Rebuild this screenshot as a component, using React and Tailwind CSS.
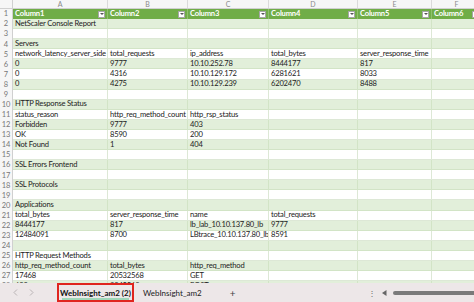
import React from "react";

const cols = [
  { key: "A", w: "w-[95px]" },
  { key: "B", w: "w-[80px]" },
  { key: "C", w: "w-[81px]" },
  { key: "D", w: "w-[89px]" },
  { key: "E", w: "w-[74px]" },
  { key: "F", w: "w-[50px]" },
];

const rows = [
  ["NetScaler Console Report"],
  [],
  ["Servers"],
  ["network_latency_server_side", "total_requests", "ip_address", "total_bytes", "server_response_time"],
  ["0", "9777", "10.10.252.78", "8444177", "817"],
  ["0", "4316", "10.10.129.172", "6281621", "8033"],
  ["0", "4275", "10.10.129.239", "6202470", "8488"],
  [],
  ["HTTP Response Status"],
  ["status_reason", "http_req_method_count", "http_rsp_status"],
  ["Forbidden", "9777", "403"],
  ["OK", "8590", "200"],
  ["Not Found", "1", "404"],
  [],
  ["SSL Errors Frontend"],
  [],
  ["SSL Protocols"],
  [],
  ["Applications"],
  ["total_bytes", "server_response_time", "name", "total_requests"],
  ["8444177", "817", "lb_lab_10.10.137.80_lb", "9777"],
  ["12484091", "8700", "LBtrace_10.10.137.80_lb", "8591"],
  [],
  ["HTTP Request Methods"],
  ["http_req_method_count", "total_bytes", "http_req_method"],
  ["17468", "20532568", "GET"],
  ["600", "2045568", "POST"],
];

function FilterButton() {
  return (
    <span className="absolute right-[2px] top-[1.5px] w-[7px] h-[7px] bg-white border border-[#a6a6a6] flex items-center justify-center">
      <span className="w-0 h-0 border-l-[2px] border-r-[2px] border-t-[2px] border-l-transparent border-r-transparent border-t-[#555]" />
    </span>
  );
}

function Chevron({ dir }) {
  return (
    <svg width="5" height="7" viewBox="0 0 5 7" fill="none" stroke="#b9b3b4" strokeWidth="1">
      {dir === "left" ? <path d="M4 0.5 L1 3.5 L4 6.5" /> : <path d="M1 0.5 L4 3.5 L1 6.5" />}
    </svg>
  );
}

export default function App() {
  return (
    <div className="w-[474px] h-[302px] overflow-hidden bg-white flex flex-col text-[#222] font-['Lato','Liberation_Sans',sans-serif] text-[7.6px] tracking-[-0.2px] leading-none">
      {/* grid */}
      <div className="h-[283px] overflow-hidden flex flex-col">
        {/* column letters */}
        <div className="flex h-[9px] shrink-0 bg-[#f6f6f6] border-b border-[#d0d0d0] text-[#8a8a8a] text-[7px] tracking-normal">
          <div className="w-[13px] shrink-0 border-r border-[#d0d0d0]" />
          {cols.map((c) => (
            <div key={c.key} className={`${c.w} shrink-0 border-r border-[#dadada] flex items-center justify-center`}>
              {c.key}
            </div>
          ))}
        </div>

        {/* header row 1 */}
        <div className="flex h-[10.08px] shrink-0">
          <div className="w-[13px] shrink-0 bg-[#f6f6f6] border-r border-[#d0d0d0] text-[#777] text-[7.5px] tracking-normal flex items-center justify-center">1</div>
          {cols.map((c, i) => (
            <div key={c.key} className={`${c.w} shrink-0 relative bg-[#70ad47] border-r border-[#8fc16c] text-white font-bold flex items-center pl-[2px]`}>
              Column{i + 1}
              <FilterButton />
            </div>
          ))}
        </div>

        {rows.map((r, ri) => {
          const green = ri % 2 === 0;
          return (
            <div key={ri} className="flex h-[10.08px] shrink-0">
              <div className="w-[13px] shrink-0 bg-[#f6f6f6] border-r border-[#d0d0d0] text-[#777] text-[7.5px] tracking-normal flex items-center justify-center">
                {ri + 2}
              </div>
              {cols.map((c, ci) => (
                <div
                  key={c.key}
                  className={`${c.w} shrink-0 whitespace-nowrap overflow-hidden flex items-center pl-[2px] border-r border-b ${
                    green ? "bg-[#e2efda] border-[#d2e4c6]" : "bg-white border-[#dde8d6]"
                  }`}
                >
                  {r[ci] || ""}
                </div>
              ))}
            </div>
          );
        })}
      </div>

      {/* sheet tabs */}
      <div className="h-[19px] shrink-0 bg-[#ede7e8] flex items-center">
        <div className="w-[57px] h-full flex items-center gap-[11px] pl-[13px]">
          <Chevron dir="left" />
          <Chevron dir="right" />
        </div>
        <div className="relative h-[19px] w-[77px] border-2 border-[#e0251f] flex items-center justify-center whitespace-nowrap font-bold text-[8px] tracking-normal text-[#111]">
          WebInsight_am2 (2)
          <span className="absolute left-[3px] right-[3px] bottom-0 h-[2px] bg-[#9fd6b8]" />
        </div>
        <div className="pl-[9px] whitespace-nowrap text-[8px] tracking-normal text-[#222]">WebInsight_am2</div>
        <div className="pl-[28px] text-[10px] text-[#444]">+</div>
        <div className="flex-1" />
        <div className="flex items-center gap-[6px]">
          <span className="text-[#666] text-[8px]">&#8942;</span>
          <svg width="5" height="6" viewBox="0 0 5 6">
            <path d="M4.5 0 L0 3 L4.5 6 Z" fill="#666" />
          </svg>
          <span className="w-[81px] h-[4px] rounded-l-full bg-[#7a7a7a]" />
        </div>
      </div>
    </div>
  );
}
